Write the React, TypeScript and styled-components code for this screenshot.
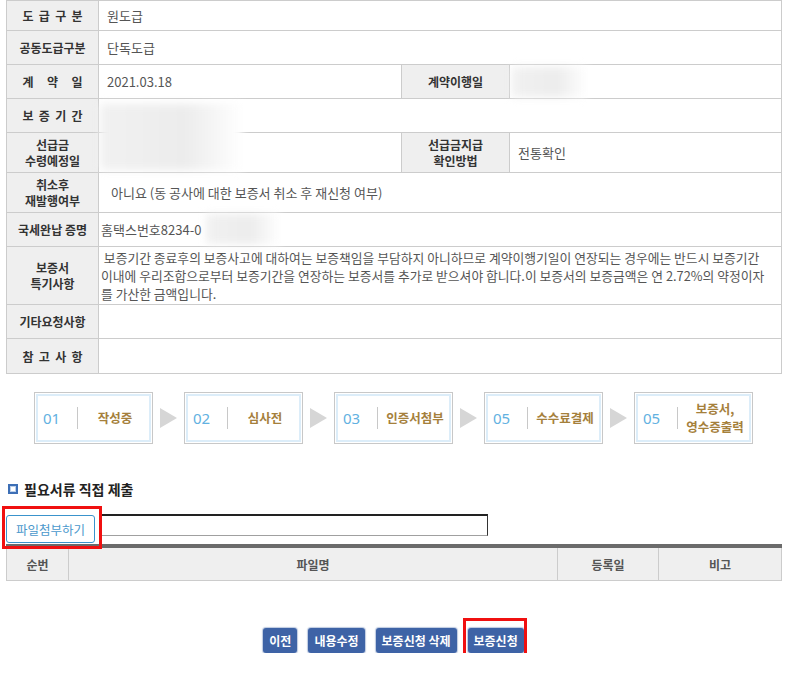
import React, { FC } from "react";
import styled, { createGlobalStyle } from "styled-components";

const GlobalStyle = createGlobalStyle`
    body {
        margin: 0;
        background: #ffffff;
        font-family: "Noto Sans CJK KR", "Noto Sans", sans-serif;
        font-size: 12px;
        color: #555555;
    }
`;

const Page = styled.div`
    width: 775px;
    padding: 0 6px;
    position: relative;
`;

const InfoTable = styled.table`
    width: 775px;
    border-collapse: collapse;
    table-layout: fixed;
    border: 1px solid #cccccc;
    border-top: none;
`;

const Row = styled.tr<{ h: number }>`
    height: ${(p) => p.h}px;
`;

const Label = styled.th`
    background: #efefef;
    border: 1px solid #cccccc;
    color: #333333;
    font-weight: bold;
    font-size: 12px;
    line-height: 16px;
    text-align: center;
    padding: 0;
`;

// spread label text evenly over a fixed width, e.g. "계 약 일"
const Spread = styled.span`
    display: inline-block;
    width: 60px;
    text-align: justify;
    text-align-last: justify;
    vertical-align: middle;
`;

const Value = styled.td<{ pad?: number }>`
    border: 1px solid #cccccc;
    padding: 0 4px 0 ${(p) => p.pad ?? 8}px;
    color: #555555;
    font-size: 13px;
    line-height: 17px;
    white-space: nowrap;
`;

const NoteLine = styled.div`
    font-size: 12.8px;
    line-height: 18px;
`;

const Blur = styled.div<{ x: number; y: number; w: number; h: number }>`
    position: absolute;
    left: ${(p) => p.x}px;
    top: ${(p) => p.y}px;
    width: ${(p) => p.w}px;
    height: ${(p) => p.h}px;
    background: linear-gradient(90deg, #f1f1f1 0%, #ececec 60%, #ffffff 100%);
    filter: blur(4px);
`;

const Steps = styled.div`
    display: flex;
    justify-content: center;
    align-items: center;
    margin-top: 18px;
`;

const StepBox = styled.div`
    width: 117px;
    height: 50px;
    border: 1px solid #c8c8c8;
    display: flex;
    align-items: center;
    box-sizing: content-box;
    position: relative;
    &::before {
        content: "";
        position: absolute;
        inset: 1px;
        border: 2px solid #dcedf9;
    }
`;

const StepNum = styled.span`
    width: 34px;
    padding-left: 8px;
    color: #62b1e1;
    font-size: 15px;
    font-family: "Noto Sans", sans-serif;
`;

const StepDivider = styled.span`
    width: 1px;
    height: 22px;
    background: #c8c8c8;
`;

const StepLabel = styled.span`
    flex: 1;
    text-align: center;
    color: #a5803c;
    font-weight: bold;
    font-size: 12.5px;
    line-height: 18px;
`;

const Arrow = styled.svg`
    width: 31px;
    height: 20px;
`;

const SectionTitle = styled.h3`
    margin: 35px 0 0 2px;
    display: flex;
    align-items: center;
    gap: 6px;
    font-size: 14px;
    font-weight: bold;
    color: #222222;
    height: 20px;
`;

const TitleIcon = styled.span`
    width: 6px;
    height: 6px;
    border: 2px solid #3d6fb6;
    background: #ffffff;
    box-shadow: inset 0 0 0 1px #bcd0ea;
`;

const FileRow = styled.div`
    display: flex;
    align-items: flex-start;
    gap: 4px;
    margin-top: 16px;
    height: 29px;
`;

const Marked = styled.div`
    position: relative;
`;

const RedMark = styled.span<{ t: number; r: number; b: number; l: number }>`
    position: absolute;
    top: ${(p) => -p.t}px;
    right: ${(p) => -p.r}px;
    bottom: ${(p) => -p.b}px;
    left: ${(p) => -p.l}px;
    border: 3px solid #f01010;
    pointer-events: none;
`;

const AttachButton = styled.button`
    width: 89px;
    height: 28px;
    border: 1px solid #3a93cc;
    border-radius: 3px;
    background: #ffffff;
    color: #4a98cc;
    font-family: "Noto Sans CJK KR", sans-serif;
    font-size: 12.5px;
    padding: 0;
`;

const FileInput = styled.div`
    width: 386px;
    height: 19px;
    margin-top: -1px;
    border-top: 2px solid #222222;
    border-left: 2px solid #222222;
    border-right: 1px solid #333333;
    border-bottom: 1px solid #a0a0a0;
`;

const FileTable = styled.table`
    width: 775px;
    border-collapse: collapse;
    table-layout: fixed;
    border-top: 4px solid #6b6b6b;
`;

const HeadCell = styled.th`
    height: 32px;
    background: #efefef;
    border: 1px solid #cccccc;
    border-top: none;
    color: #555555;
    font-weight: bold;
    font-size: 12px;
    padding: 0;
`;

const Actions = styled.div`
    display: flex;
    justify-content: center;
    gap: 11px;
    margin-top: 47px;
`;

const ActionButton = styled.button`
    height: 25px;
    padding: 0 6px;
    border: none;
    border-radius: 3px;
    background: #3e63a6;
    color: #ffffff;
    font-family: "Noto Sans CJK KR", sans-serif;
    font-weight: bold;
    font-size: 12px;
    box-shadow: 0 0 1px 1px rgba(62, 99, 166, 0.35);
`;

const steps = [
    { num: "01", label: "작성중" },
    { num: "02", label: "심사전" },
    { num: "03", label: "인증서첨부" },
    { num: "05", label: "수수료결제" },
    { num: "05", label: "보증서,\n영수증출력" },
];

const noteLines = [
    "\u00a0보증기간 종료후의 보증사고에 대하여는 보증책임을 부담하지 아니하므로 계약이행기일이 연장되는 경우에는 반드시 보증기간",
    "이내에 우리조합으로부터 보증기간을 연장하는 보증서를 추가로 받으셔야 합니다.이 보증서의 보증금액은 연 2.72%의 약정이자",
    "를 가산한 금액입니다.",
];

const StepArrow: FC = () => (
    <Arrow viewBox="0 0 31 20">
        <polygon points="7,0 24,10 7,20" fill="#d6d6d6" />
    </Arrow>
);

const App: FC = () => {
    return (
        <Page>
            <GlobalStyle />
            <InfoTable>
                <colgroup>
                    <col style={{ width: 92 }} />
                    <col style={{ width: 303 }} />
                    <col style={{ width: 108 }} />
                    <col style={{ width: 272 }} />
                </colgroup>
                <tbody>
                    <Row h={30}>
                        <Label>
                            <Spread>도 급 구 분</Spread>
                        </Label>
                        <Value colSpan={3}>원도급</Value>
                    </Row>
                    <Row h={34}>
                        <Label>공동도급구분</Label>
                        <Value colSpan={3}>단독도급</Value>
                    </Row>
                    <Row h={34}>
                        <Label>
                            <Spread>계 약 일</Spread>
                        </Label>
                        <Value>2021.03.18</Value>
                        <Label>계약이행일</Label>
                        <Value />
                    </Row>
                    <Row h={34}>
                        <Label>
                            <Spread>보 증 기 간</Spread>
                        </Label>
                        <Value colSpan={3} />
                    </Row>
                    <Row h={40}>
                        <Label>
                            선급금
                            <br />
                            수령예정일
                        </Label>
                        <Value />
                        <Label>
                            선급금지급
                            <br />
                            확인방법
                        </Label>
                        <Value>전통확인</Value>
                    </Row>
                    <Row h={40}>
                        <Label>
                            취소후
                            <br />
                            재발행여부
                        </Label>
                        <Value colSpan={3} pad={12}>
                            아니요 (동 공사에 대한 보증서 취소 후 재신청 여부)
                        </Value>
                    </Row>
                    <Row h={34}>
                        <Label>국세완납 증명</Label>
                        <Value colSpan={3} pad={2}>
                            홈택스번호8234-0
                        </Value>
                    </Row>
                    <Row h={58}>
                        <Label>
                            보증서
                            <br />
                            특기사항
                        </Label>
                        <Value colSpan={3} pad={2}>
                            {noteLines.map((line, i) => (
                                <NoteLine key={i}>{line}</NoteLine>
                            ))}
                        </Value>
                    </Row>
                    <Row h={34}>
                        <Label>기타요청사항</Label>
                        <Value colSpan={3} />
                    </Row>
                    <Row h={35}>
                        <Label>
                            <Spread>참 고 사 항</Spread>
                        </Label>
                        <Value colSpan={3} />
                    </Row>
                </tbody>
            </InfoTable>

            <Blur x={512} y={67} w={75} h={30} />
            <Blur x={100} y={104} w={142} h={66} />
            <Blur x={206} y={214} w={74} h={30} />

            <Steps>
                {steps.map((s, i) => (
                    <React.Fragment key={i}>
                        {i > 0 && <StepArrow />}
                        <StepBox>
                            <StepNum>{s.num}</StepNum>
                            <StepDivider />
                            <StepLabel>
                                {s.label.split("\n").map((line, j) => (
                                    <div key={j}>{line}</div>
                                ))}
                            </StepLabel>
                        </StepBox>
                    </React.Fragment>
                ))}
            </Steps>

            <SectionTitle>
                <TitleIcon />
                필요서류 직접 제출
            </SectionTitle>

            <FileRow>
                <Marked>
                    <AttachButton>파일첨부하기</AttachButton>
                    <RedMark t={9} r={7} b={6} l={4} />
                </Marked>
                <FileInput />
            </FileRow>

            <FileTable>
                <colgroup>
                    <col style={{ width: 62 }} />
                    <col style={{ width: 489 }} />
                    <col style={{ width: 101 }} />
                    <col style={{ width: 123 }} />
                </colgroup>
                <thead>
                    <tr>
                        <HeadCell>순번</HeadCell>
                        <HeadCell>파일명</HeadCell>
                        <HeadCell>등록일</HeadCell>
                        <HeadCell>비고</HeadCell>
                    </tr>
                </thead>
            </FileTable>

            <Actions>
                <ActionButton>이전</ActionButton>
                <ActionButton>내용수정</ActionButton>
                <ActionButton>보증신청 삭제</ActionButton>
                <Marked>
                    <ActionButton>보증신청</ActionButton>
                    <RedMark t={10} r={3} b={10} l={5} />
                </Marked>
            </Actions>
        </Page>
    );
};

export default App;
